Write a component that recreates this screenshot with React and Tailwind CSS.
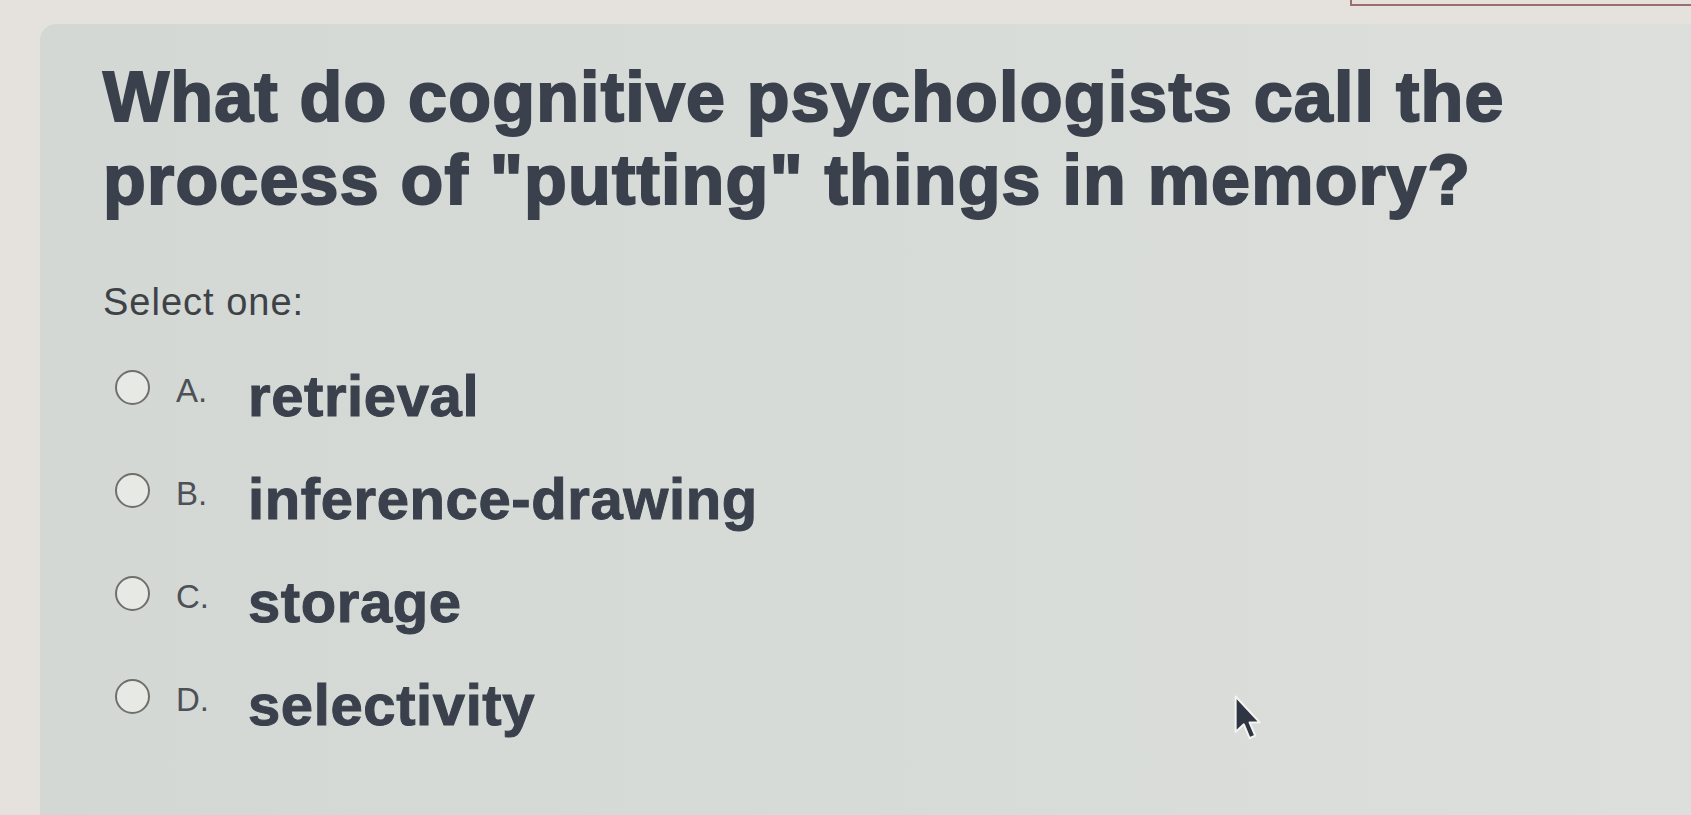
import React from 'react';

const options = [
  { key: 'A.', text: 'retrieval' },
  { key: 'B.', text: 'inference-drawing' },
  { key: 'C.', text: 'storage' },
  { key: 'D.', text: 'selectivity' },
];

function Radio() {
  return (
    <span className="mt-[9px] block h-[35px] w-[35px] shrink-0 rounded-full border-2 border-[#6f706c] bg-[#e7e9e4]" />
  );
}

function Cursor() {
  return (
    <svg width="28" height="48" viewBox="0 0 22 38" className="absolute left-[1233px] top-[694px]">
      <path
        d="M2 2 L2 30 L8.5 24 L13 35 L17.5 33 L13 22.5 L21 22.5 Z"
        fill="#2f3542"
        stroke="#f4f5f2"
        strokeWidth="1.6"
        strokeLinejoin="round"
      />
    </svg>
  );
}

export default function App() {
  return (
    <div
      className="relative flex h-[815px] w-[1691px] flex-col overflow-hidden bg-[#e5e2dd]"
      style={{ fontFamily: '"Liberation Sans", Arial, sans-serif' }}
    >
      {/* strip above the card, with the edge of another box */}
      <div className="flex h-[24px] shrink-0 justify-end">
        <div className="h-[6px] w-[341px] border-b-2 border-l-2 border-[#9c6f6f]" />
      </div>

      <div className="ml-[40px] flex-1 rounded-tl-[16px] bg-linear-to-r from-[#d3d8d4] to-[#dcdfdb] pl-[63px] pt-[32px]">
        <h1 className="max-w-[1440px] text-[70px] font-bold leading-[83px] tracking-[1.2px] text-[#3a404c] [-webkit-text-stroke:2px_#3a404c]">
          What do cognitive psychologists call the process of "putting" things in memory?
        </h1>

        <p className="mt-[58px] text-[38px] leading-[44px] tracking-[1px] text-[#3e4247]">
          Select one:
        </p>

        <div className="mt-[37px] flex flex-col">
          {options.map((o) => (
            <div key={o.key} className="flex h-[103px] items-start pl-[12px]">
              <Radio />
              <span className="ml-[26px] mt-[10px] w-[72px] shrink-0 text-[33px] leading-[40px] text-[#4d5157]">
                {o.key}
              </span>
              <span className="text-[58px] font-bold leading-[70px] tracking-[0.6px] text-[#3a404c] [-webkit-text-stroke:1px_#3a404c]">
                {o.text}
              </span>
            </div>
          ))}
        </div>
      </div>

      <Cursor />
    </div>
  );
}
